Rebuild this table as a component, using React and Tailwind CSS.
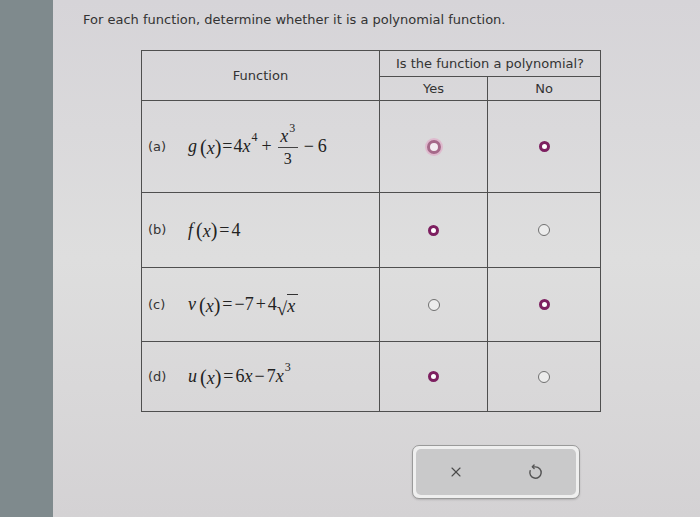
import { X } from "lucide-react";

const serif = "font-['Liberation_Serif',serif]";

function Sup({ children }) {
  return <span className="relative -top-[10px] text-[12px] ml-[1px]">{children}</span>;
}

function Paren({ children }) {
  return (
    <span className="ml-[3px]">
      <span className="text-[20px] not-italic">(</span>
      {children}
      <span className="text-[20px] not-italic">)</span>
    </span>
  );
}

function Radio({ state }) {
  if (state === "selected")
    return <div className="w-[11px] h-[11px] rounded-full border-[3px] border-[#7d1f60] bg-white" />;
  if (state === "focus")
    return (
      <div className="w-[14px] h-[14px] rounded-full border-[3px] border-[#a66a8a] bg-[#f4eef2] shadow-[0_0_0_2px_rgba(225,160,195,0.55)]" />
    );
  return <div className="w-[12px] h-[12px] rounded-full border-[1.5px] border-[#707070] bg-[#ececec]" />;
}

const rows = [
  {
    label: "(a)",
    h: "h-[92px]",
    yes: "focus",
    no: "selected",
    expr: (
      <span className="flex items-center">
        <i>g</i>
        <Paren><i>x</i></Paren>
        <span className="mx-[1px]">=</span>4<i>x</i>
        <Sup>4</Sup>
        <span className="mx-[4px]">+</span>
        <span className="inline-flex flex-col items-center leading-none mx-[2px]">
          <span className="pb-[2px]"><i>x</i><Sup>3</Sup></span>
          <span className="border-t border-[#444] w-[20px]" />
          <span className="pt-[3px] text-[16px]">3</span>
        </span>
        <span className="mx-[4px]">−</span>6
      </span>
    ),
  },
  {
    label: "(b)",
    h: "h-[75px]",
    yes: "selected",
    no: "empty",
    expr: (
      <span className="flex items-center">
        <i>f</i>
        <Paren><i>x</i></Paren>
        <span className="mx-[2px]">=</span>4
      </span>
    ),
  },
  {
    label: "(c)",
    h: "h-[74px]",
    yes: "empty",
    no: "selected",
    expr: (
      <span className="flex items-center">
        <i>v</i>
        <Paren><i>x</i></Paren>
        <span className="mx-[2px]">=</span>−7<span className="mx-[2px]">+</span>4
        <span className="flex items-end">
          <span className="text-[19px] leading-none">√</span>
          <span className="border-t border-[#333] mt-[3px] pr-[3px] leading-tight"><i>x</i></span>
        </span>
      </span>
    ),
  },
  {
    label: "(d)",
    h: "h-[70px]",
    yes: "selected",
    no: "empty",
    expr: (
      <span className="flex items-center">
        <i>u</i>
        <Paren><i>x</i></Paren>
        <span className="mx-[2px]">=</span>6<i>x</i>
        <span className="mx-[2px]">−</span>7<i>x</i>
        <Sup>3</Sup>
      </span>
    ),
  },
];

function Undo() {
  return (
    <svg width="17" height="17" viewBox="0 0 24 24" fill="none" stroke="#555" strokeWidth="2" strokeLinecap="round" strokeLinejoin="round">
      <path d="M8 4h4a8 8 0 1 1-7.6 5.5" />
      <path d="M10 1.5 7.5 4 10 6.5" />
    </svg>
  );
}

export default function App() {
  return (
    <div className="w-[700px] h-[517px] flex font-['DejaVu_Sans',sans-serif] text-[#333]">
      <div className="w-[53px] h-full bg-[#7f8a8d]" />
      <div className="flex-1 h-full bg-gradient-to-b from-[#d6d4d8] via-[#dedede] to-[#d4d2d4]">
        <p className="pl-[30px] pt-[12px] text-[13px] leading-[16px]">
          For each function, determine whether it is a polynomial function.
        </p>
        <table className="ml-[88px] mt-[22px] border-collapse text-[13px]">
          <thead>
            <tr className="h-[26px]">
              <th rowSpan={2} className="w-[238px] border border-[#4f4f4f] font-normal">Function</th>
              <th colSpan={2} className="border border-[#4f4f4f] font-normal">Is the function a polynomial?</th>
            </tr>
            <tr className="h-[24px]">
              <th className="w-[108px] border border-[#4f4f4f] font-normal">Yes</th>
              <th className="w-[113px] border border-[#4f4f4f] font-normal">No</th>
            </tr>
          </thead>
          <tbody>
            {rows.map((r) => (
              <tr key={r.label} className={r.h}>
                <td className="border border-[#4f4f4f] pl-[6px]">
                  <div className="flex items-center">
                    <span className="w-[40px]">{r.label}</span>
                    <span className={`${serif} text-[18px] text-[#222]`}>{r.expr}</span>
                  </div>
                </td>
                <td className="border border-[#4f4f4f]">
                  <div className="flex justify-center"><Radio state={r.yes} /></div>
                </td>
                <td className="border border-[#4f4f4f]">
                  <div className="flex justify-center"><Radio state={r.no} /></div>
                </td>
              </tr>
            ))}
          </tbody>
        </table>
        <div className="ml-[359px] mt-[33px] w-[168px] h-[54px] rounded-[7px] border border-[#9a9a9a] bg-[#efefef] p-[3px] shadow-[0_1px_2px_rgba(0,0,0,0.15)]">
          <div className="h-full rounded-[5px] bg-[#c9c9ca] flex items-center justify-around">
            <X size={16} strokeWidth={1.6} color="#4a4a4a" />
            <Undo />
          </div>
        </div>
      </div>
    </div>
  );
}
